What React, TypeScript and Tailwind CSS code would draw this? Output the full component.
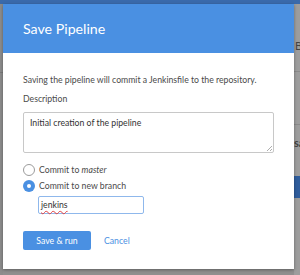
import React from "react";

const font = { fontFamily: "Lato, 'Open Sans', sans-serif" };

export default function App() {
  return (
    <div className="relative w-[300px] h-[275px] overflow-hidden bg-[#8f8f8f]" style={font}>
      {/* dimmed page behind the dialog */}
      <div className="flex flex-col h-full">
        <div className="h-[4px] bg-[#3a6aab]" />
        <div className="flex flex-1">
          <div className="w-[3px] bg-[#8c8c8c] flex flex-col">
            <div className="h-[68px]" />
            <div className="h-px bg-[#7a7a7a]" />
          </div>
          <div className="flex-1" />
          <div className="w-[6px] bg-[#9d9d9d] flex flex-col text-[11px] leading-none text-[#444] overflow-hidden">
            <div className="h-[36px]" />
            <div className="pl-[1px] whitespace-nowrap">B:</div>
            <div className="h-[20px]" />
            <div className="h-px bg-[#8a8a8a]" />
            <div className="h-[52px]" />
            <div className="h-px bg-[#8a8a8a]" />
            <div className="h-[12px]" />
            <div className="font-bold whitespace-nowrap">sa</div>
            <div className="h-[28px]" />
            <div className="h-[22px] bg-[#2f5d9c]" />
          </div>
        </div>
      </div>

      {/* dialog */}
      <div className="absolute left-[3px] top-[4px] w-[291px] h-[265px] bg-white shadow-[0_1px_3px_rgba(0,0,0,0.35)] flex flex-col">
        <div className="h-[49px] bg-[#4a90e2] flex items-center pl-[20px]">
          <span className="text-white text-[14.2px]">Save Pipeline</span>
        </div>
        <div className="flex flex-col px-[20px] pt-[20px] text-[8.7px] text-[#4a4a4a]">
          <p className="leading-[14px] whitespace-nowrap">Saving the pipeline will commit a Jenkinsfile to the repository.</p>
          <p className="mt-[5px] leading-[14px]">Description</p>
          <div className="relative mt-[6px] w-[251px] h-[41px] border border-[#c8c8c8] rounded-[2px] px-[6px] pt-[3px] leading-[14px] text-[#333]">
            Initial creation of the pipeline
            <svg className="absolute right-[1px] bottom-[1px]" width="6" height="6" viewBox="0 0 6 6">
              <path d="M6 1 L1 6 M6 4 L4 6" stroke="#999" strokeWidth="0.8" />
            </svg>
          </div>
          <div className="mt-[10px] flex items-center gap-[4px] h-[14px]">
            <span className="w-[12px] h-[12px] rounded-full border border-[#9b9b9b] bg-white" />
            <span className="leading-[14px]">
              Commit to <em>master</em>
            </span>
          </div>
          <div className="mt-[2px] flex items-center gap-[4px] h-[14px]">
            <span className="w-[12px] h-[12px] rounded-full bg-[#4a90e2] flex items-center justify-center">
              <span className="w-[4px] h-[4px] rounded-full bg-white" />
            </span>
            <span className="leading-[14px]">Commit to new branch</span>
          </div>
          <div className="mt-[3px] ml-[15px] w-[106px] h-[18px] border border-[#8fb8ec] rounded-[2px] px-[2px] flex items-center text-[#333]">
            <span className="underline decoration-wavy decoration-[#e04040] decoration-[1px] underline-offset-[2px]">jenkins</span>
          </div>
          <div className="mt-[17px] flex items-center gap-[13px]">
            <button className="w-[68px] h-[19px] bg-[#4a90e2] text-white text-[8.7px] rounded-[2px]">Save &amp; run</button>
            <span className="text-[#4a90e2]">Cancel</span>
          </div>
        </div>
      </div>
    </div>
  );
}
